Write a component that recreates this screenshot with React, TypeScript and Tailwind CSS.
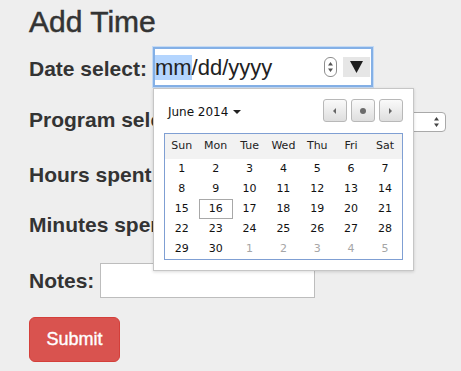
import React from "react";

const weekDays = ["Sun", "Mon", "Tue", "Wed", "Thu", "Fri", "Sat"];

const weeks: { day: number; muted?: boolean }[][] = [
  [1, 2, 3, 4, 5, 6, 7].map((day) => ({ day })),
  [8, 9, 10, 11, 12, 13, 14].map((day) => ({ day })),
  [15, 16, 17, 18, 19, 20, 21].map((day) => ({ day })),
  [22, 23, 24, 25, 26, 27, 28].map((day) => ({ day })),
  [
    { day: 29 },
    { day: 30 },
    { day: 1, muted: true },
    { day: 2, muted: true },
    { day: 3, muted: true },
    { day: 4, muted: true },
    { day: 5, muted: true },
  ],
];

function NavButton({ children }: { children: React.ReactNode }) {
  return (
    <button
      type="button"
      className="flex h-[23px] w-6 items-center justify-center rounded-[3px] border border-[#b8b8b8] bg-gradient-to-b from-[#fafafa] to-[#dedede]"
    >
      {children}
    </button>
  );
}

function Calendar() {
  return (
    <div className="absolute left-0 top-[41px] z-10 w-[261px] border border-[#c6c6c6] bg-white px-[10px] pb-[10px] pt-[10px] font-['DejaVu_Sans',sans-serif] shadow-[0_1px_3px_rgba(0,0,0,0.15)]">
      <div className="flex h-[23px] items-center justify-between">
        <div className="flex items-center pl-1 pt-[2px] text-[12px] text-[#111]">
          <span>June 2014</span>
          <svg className="ml-[5px]" width="8" height="4" viewBox="0 0 8 4">
            <path d="M0 0h8L4 4z" fill="#222" />
          </svg>
        </div>
        <div className="flex gap-1">
          <NavButton>
            <svg width="3" height="6" viewBox="0 0 3 6">
              <path d="M3 0v6L0 3z" fill="#666" />
            </svg>
          </NavButton>
          <NavButton>
            <span className="h-[6px] w-[6px] rounded-full bg-[#6b6b6b]" />
          </NavButton>
          <NavButton>
            <svg width="3" height="6" viewBox="0 0 3 6">
              <path d="M0 0v6l3-3z" fill="#666" />
            </svg>
          </NavButton>
        </div>
      </div>

      <div className="mt-[11px] border border-[#7f9fd3] text-[11px]">
        <div className="grid h-[25px] grid-cols-7 items-center bg-[#f2f2f2] text-center text-[#222]">
          {weekDays.map((d) => (
            <span key={d}>{d}</span>
          ))}
        </div>
        {weeks.map((week, i) => (
          <div key={i} className="grid h-5 grid-cols-7 text-center text-[#111]">
            {week.map((cell, j) => (
              <span
                key={j}
                className={
                  "flex items-center justify-center " +
                  (cell.muted ? "text-[#a6a6a6] " : "") +
                  (cell.day === 16 && !cell.muted ? "border border-[#a8a8a8]" : "")
                }
              >
                {cell.day}
              </span>
            ))}
          </div>
        ))}
      </div>
    </div>
  );
}

export default function App() {
  const label = "text-[21px] font-bold leading-6 whitespace-nowrap";
  return (
    <div className="h-[371px] w-[461px] overflow-hidden bg-[#eeeeee] pl-[29px] pt-[5px] font-['Liberation_Sans',Arial,sans-serif] text-[#333]">
      <h1 className="text-[30px] leading-[33px] [-webkit-text-stroke:0.5px_#333]">Add Time</h1>

      <div className="mt-[9px] flex h-10 items-center">
        <span className={label + " mt-1"}>Date select:</span>
        <div className="relative ml-[6px]">
          <div className="flex h-10 w-[220px] items-center border-2 border-[#84b0e6] bg-white pr-px shadow-[0_0_0_1px_#c4daf4]">
            <span className="text-[22px] leading-[25px] text-[#222]">
              <span className="bg-[#b4d5fe]">mm</span>/dd/yyyy
            </span>
            <span className="flex-1" />
            <span className="flex h-5 w-[13px] items-center justify-center rounded-[6px] border border-[#8e8e8e] bg-white">
              <svg width="5" height="12" viewBox="0 0 5 12">
                <path d="M2.5 1L5 4.5H0z M2.5 11L5 7.5H0z" fill="#555" />
              </svg>
            </span>
            <span className="ml-[6px] flex h-5 w-[27px] items-center justify-center bg-[#e6e6e6]">
              <svg width="13" height="12" viewBox="0 0 13 12">
                <path d="M0 0h13L6.5 12z" fill="#1e1e1e" />
              </svg>
            </span>
          </div>
          <Calendar />
        </div>
      </div>

      <div className="mt-[25px] flex h-5 w-[417px] items-center">
        <span className={label + " -mt-1"}>Program select:</span>
        <div className="ml-[6px] flex h-5 flex-1 items-center justify-end rounded-[4px] border border-[#a9a9a9] bg-white pr-[6px]">
          <svg width="5" height="10" viewBox="0 0 5 10">
            <path d="M2.5 0L5 3.5H0z M2.5 10L5 6.5H0z" fill="#444" />
          </svg>
        </div>
      </div>

      <div className="mt-[26px] flex h-[34px] items-center">
        <span className={label}>Hours spent:</span>
        <div className="ml-[6px] h-[34px] w-[215px] border border-[#bbb] bg-white" />
      </div>

      <div className="mt-4 flex h-[34px] items-center">
        <span className={label}>Minutes spent:</span>
        <div className="ml-[6px] h-[34px] w-[215px] border border-[#bbb] bg-white" />
      </div>

      <div className="mt-[21px] flex h-[35px] items-center">
        <span className={label}>Notes:</span>
        <div className="ml-[6px] h-[35px] w-[215px] border border-[#bdbdbd] bg-white" />
      </div>

      <button
        type="button"
        className="mt-[19px] h-[45px] w-[91px] rounded-md border border-[#d43f3a] bg-[#d9534f] text-[18px] text-white [-webkit-text-stroke:0.4px_#fff]"
      >
        Submit
      </button>
    </div>
  );
}
